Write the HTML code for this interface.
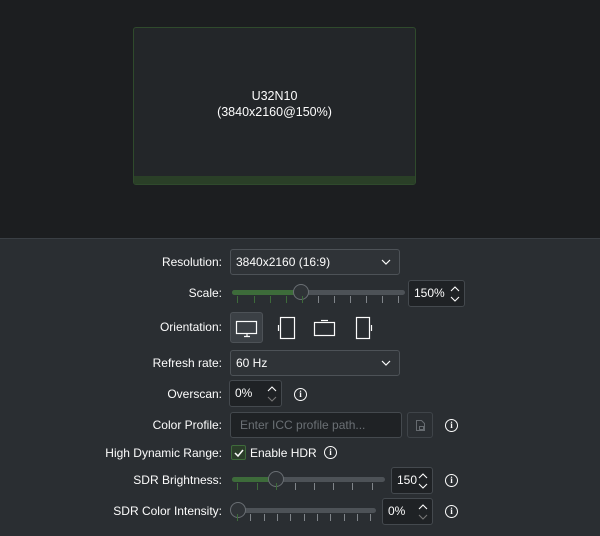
<!DOCTYPE html><html><head><style>
body{margin:0;width:600px;height:536px;background:#2a2e32;font-family:"Liberation Sans",sans-serif;font-size:12px;color:#fcfcfc;position:relative;overflow:hidden}
.a{position:absolute}
.top{left:0;top:0;width:600px;height:238px;background:#1c1e20;border-bottom:1px solid #3a3f44}
.mon{left:133px;top:27px;width:283px;height:158px;background:#232629;border:1px solid #2f4a2c;border-radius:3px;box-sizing:border-box;overflow:hidden}
.lbl{right:378px;text-align:right;white-space:nowrap;line-height:14px}
.box{background:#2f3337;border:1px solid #4d5257;border-radius:3px;box-sizing:border-box;padding-left:5px;line-height:24px}
.dark{background:#1f2225;border:1px solid #44494e}
.chev{position:absolute;right:8px;top:8px}
.info{width:11px;height:11px;border:1.3px solid #fcfcfc;border-radius:50%;font-size:9px;font-weight:bold;line-height:11px;text-align:center;font-family:"Liberation Serif",serif}
.track{height:5px;background:#4d5257;border-radius:3px}
.knob{width:16px;height:16px;border-radius:50%;background:#2f3337;border:1px solid #6a6f74;box-sizing:border-box}
</style></head><body>
<div class="a top"></div>
<div class="a mon"><div class="a" style="left:0;right:0;top:60px;text-align:center;line-height:16px;font-size:12.5px">U32N10<br>(3840x2160@150%)</div><div class="a" style="left:0;right:0;bottom:0;height:8px;background:#2a3f27"></div></div>

<div class="a lbl" style="top:255px">Resolution:</div>
<div class="a box" style="left:230px;top:249px;width:170px;height:26px">3840x2160 (16:9)<svg class="chev" width="10" height="8"><path d="M1 2l4 4 4-4" fill="none" stroke="#fcfcfc" stroke-width="1.2"/></svg></div>

<div class="a lbl" style="top:286px">Scale:</div>
<div class="a track" style="left:232px;top:290px;width:173px"></div>
<div class="a track" style="left:232px;top:290px;width:70px;background:#3d6b3a"></div>
<div class="a knob" style="left:293px;top:284px"></div>
<div class="a box dark" style="left:408px;top:280px;width:57px;height:27px;line-height:25px">150%<svg class="a" style="right:4px;top:4px" width="10" height="18"><path d="M1 6l4-4 4 4M1 12l4 4 4-4" fill="none" stroke="#fcfcfc" stroke-width="1.1"/></svg></div>

<div class="a lbl" style="top:320px">Orientation:</div>
<div class="a" style="left:230px;top:312px;width:33px;height:31px;background:#3b4045;border:1px solid #4d5257;border-radius:3px;box-sizing:border-box"></div>
<svg class="a" style="left:230px;top:312px" width="160" height="32" fill="none" stroke="#fcfcfc" stroke-width="1.2">
<rect x="6.5" y="9.5" width="20" height="12"/><path d="M14 24.5h6M17 22v2"/>
<rect x="50.5" y="5.5" width="14" height="21"/><path d="M48.5 13v6"/>
<rect x="84.5" y="10.5" width="20" height="13"/><path d="M91 8.5h7"/>
<rect x="126.5" y="5.5" width="13" height="21"/><path d="M141.5 13v6"/>
</svg>

<div class="a lbl" style="top:356px">Refresh rate:</div>
<div class="a box" style="left:230px;top:350px;width:170px;height:26px">60 Hz<svg class="chev" width="10" height="8"><path d="M1 2l4 4 4-4" fill="none" stroke="#fcfcfc" stroke-width="1.2"/></svg></div>

<div class="a lbl" style="top:387px">Overscan:</div>
<div class="a box dark" style="left:229px;top:380px;width:53px;height:27px;line-height:25px">0%<svg class="a" style="right:4px;top:4px" width="10" height="18"><path d="M1 6l4-4 4 4" fill="none" stroke="#fcfcfc" stroke-width="1.1"/><path d="M1 12l4 4 4-4" fill="none" stroke="#777" stroke-width="1.1"/></svg></div>
<div class="a info" style="left:294px;top:388px">i</div>

<div class="a lbl" style="top:418px">Color Profile:</div>
<div class="a box dark" style="left:230px;top:412px;width:172px;height:26px;color:#6b7075;padding-left:9px">Enter ICC profile path...</div>
<div class="a" style="left:407px;top:412px;width:26px;height:26px;border:1px solid #3f4449;border-radius:3px;box-sizing:border-box"><svg class="a" style="left:7px;top:6px" width="12" height="13" fill="none" stroke="#666b70"><path d="M1.5 1.5h5l3 3v7h-8z"/><rect x="4.5" y="7.5" width="4" height="3"/></svg></div>
<div class="a info" style="left:445px;top:419px">i</div>

<div class="a lbl" style="top:446px">High Dynamic Range:</div>
<div class="a" style="left:231px;top:445px;width:15px;height:15px;background:#2b3d2a;border:1px solid #3f6b3b;border-radius:2px;box-sizing:border-box"><svg class="a" style="left:1px;top:1px" width="12" height="12"><path d="M2 6l3 3 5-6" fill="none" stroke="#fcfcfc" stroke-width="1.5"/></svg></div>
<div class="a" style="left:250px;top:446px;line-height:14px">Enable HDR</div>
<div class="a info" style="left:324px;top:446px">i</div>

<div class="a lbl" style="top:473px">SDR Brightness:</div>
<div class="a track" style="left:232px;top:477px;width:153px"></div>
<div class="a track" style="left:232px;top:477px;width:45px;background:#3d6b3a"></div>
<div class="a knob" style="left:268px;top:471px"></div>
<div class="a box dark" style="left:391px;top:467px;width:42px;height:27px;line-height:25px">150<svg class="a" style="right:4px;top:4px" width="10" height="18"><path d="M1 6l4-4 4 4M1 12l4 4 4-4" fill="none" stroke="#fcfcfc" stroke-width="1.1"/></svg></div>
<div class="a info" style="left:445px;top:474px">i</div>

<div class="a lbl" style="top:504px">SDR Color Intensity:</div>
<div class="a track" style="left:232px;top:508px;width:144px"></div>
<div class="a knob" style="left:230px;top:502px"></div>
<div class="a box dark" style="left:382px;top:498px;width:51px;height:27px;line-height:25px">0%<svg class="a" style="right:4px;top:4px" width="10" height="18"><path d="M1 6l4-4 4 4" fill="none" stroke="#fcfcfc" stroke-width="1.1"/><path d="M1 12l4 4 4-4" fill="none" stroke="#777" stroke-width="1.1"/></svg></div>
<div class="a info" style="left:445px;top:505px">i</div>

<svg class="a" style="left:0;top:0" width="600" height="536">
<g stroke-width="1">
<path stroke="#3d6b3a" d="M237.5 296v7M254.5 296v7M270.5 296v7M286.5 296v7M302.5 296v7"/>
<path stroke="#80858a" d="M318.5 296v7M334.5 296v7M350.5 296v7M366.5 296v7M382.5 296v7M398.5 296v7"/>
<path stroke="#3d6b3a" d="M237.5 483v7M257.5 483v7M276.5 483v7"/>
<path stroke="#80858a" d="M295.5 483v7M314.5 483v7M333.5 483v7M352.5 483v7M372.5 483v7"/>
<path stroke="#3d6b3a" d="M237.5 514v7"/>
<path stroke="#80858a" d="M250.5 514v7M264.5 514v7M277.5 514v7M290.5 514v7M304.5 514v7M317.5 514v7M330.5 514v7M344.5 514v7M357.5 514v7M370.5 514v7"/>
</g></svg>
</body></html>
